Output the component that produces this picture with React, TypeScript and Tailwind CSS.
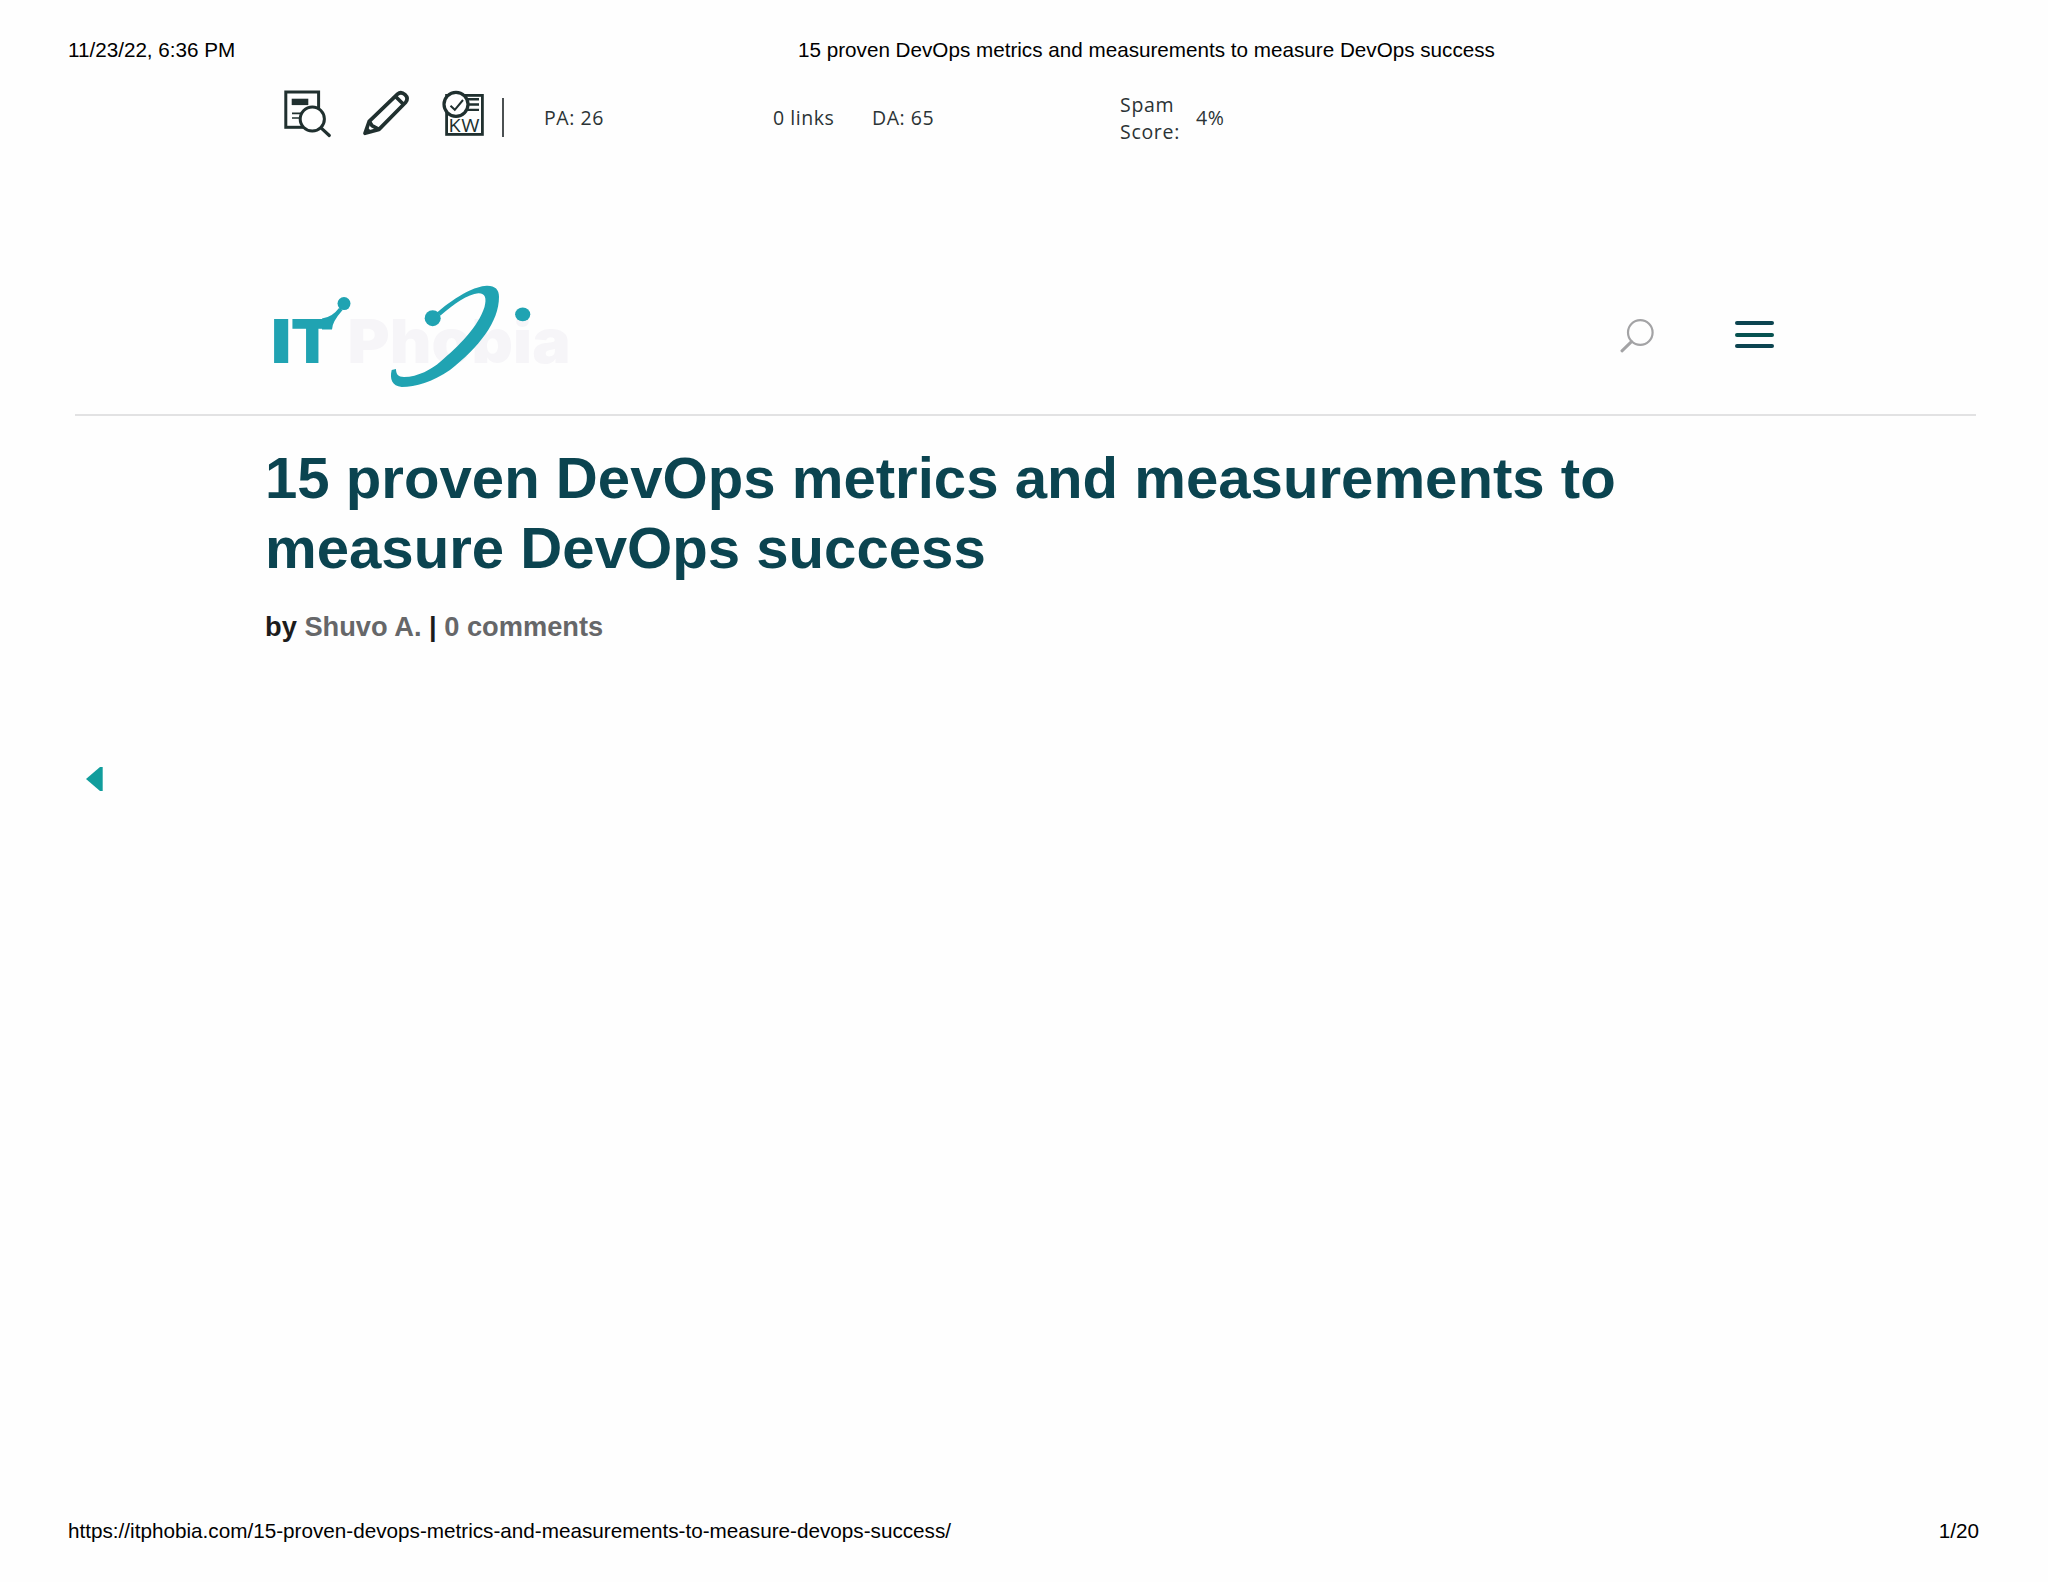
import React from 'react';

const PAGE_TITLE = '15 proven DevOps metrics and measurements to measure DevOps success';

const AuditIcon: React.FC = () => (
  <svg width="56" height="56" viewBox="0 0 56 56" fill="none" stroke="#20302f" strokeWidth="3">
    <rect x="5.8" y="6" width="32.8" height="35.3" />
    <path d="M11.7 12.7h16.6v6.4H11.7z" fill="#20302f" stroke="none" />
    <path d="M12 27.3h11M12 32h8" strokeWidth="1.7" />
    <circle cx="32.3" cy="33" r="12.1" fill="#fff" />
    <path d="M41 41.8l8.3 7.7" strokeWidth="3.2" strokeLinecap="round" />
  </svg>
);

const PencilIcon: React.FC = () => (
  <svg width="56" height="56" viewBox="0 0 56 56" fill="none" stroke="#20302f" strokeWidth="3.7" strokeLinejoin="round">
    <path d="M9 47.3L13.2 35.3 41.5 8.2Q45 5 49 8.7T49.5 16.5L23 43.4z" />
    <path d="M39.5 10.5l8.2 8M13.2 35.3l2.7 4.3 7.1 3.8" />
    <path d="M8.5 47.8l2.2-7.3 5 5z" fill="#20302f" stroke="none" />
  </svg>
);

const KeywordIcon: React.FC = () => (
  <svg width="56" height="56" viewBox="0 0 56 56" fill="none" stroke="#20302f" strokeWidth="2.8">
    <rect x="8.6" y="9.4" width="35.8" height="39" />
    <path d="M29 13.2h12M29 18.5h12M29 23.9h12" strokeWidth="2.4" />
    <circle cx="18" cy="18.3" r="12" fill="#fff" strokeWidth="3.2" />
    <path d="M12.5 19.8l4.3 4 8.2-9.8" strokeWidth="2" />
    <text x="10.5" y="46.3" fontFamily="Open Sans" fontSize="17.8" fill="#20302f" stroke="none" textLength="31.5" lengthAdjust="spacingAndGlyphs">KW</text>
  </svg>
);

const Logo: React.FC = () => (
  <svg width="304" height="110" viewBox="0 0 304 110" fontFamily="Inter" fontWeight="900" fontSize="61">
    <text x="75.5" y="83" fill="#f6f5f8" textLength="223" lengthAdjust="spacingAndGlyphs">Phobia</text>
    <g fill="#20a3b2">
      <text x="-1.2" y="82.7" textLength="20.8" lengthAdjust="spacingAndGlyphs">I</text>
      <text x="18.7" y="82.7" textLength="43" lengthAdjust="spacingAndGlyphs">T</text>
      <path d="M50 38.4Q60 37.5 67 28l3.6 2Q60 42 60 49.4H50z" />
      <circle cx="72" cy="23.6" r="6.5" />
      <circle cx="160.7" cy="38.2" r="8" />
      <ellipse cx="250.7" cy="34.3" rx="7.6" ry="6.9" />
      <path d="M165 32.5C187 14 203 6.5 214.7 5.7C223 5.5 227 9.5 227 16.7C227 42 207 67 178 90C160 102 144 107 129.7 107C120 106 117.5 99 119.7 90L124 89C124 94 126 97 132 97C146 97 160 89 168 82C187 66 206 47 212.5 27C215 18 213 13 206.3 13.3C196 14 182 24 168.5 35.5Z" />
    </g>
  </svg>
);

const Toolbar: React.FC = () => (
  <div className="flex h-20 items-center pl-[280px] font-['Open_Sans',sans-serif] text-[19.5px] leading-[27px] tracking-[0.55px] text-[#2b3335]">
    <div className="flex h-full w-[222px] pt-1.5">
      <AuditIcon />
      <div className="ml-5 mr-[26px]">
        <PencilIcon />
      </div>
      <KeywordIcon />
    </div>
    <div className="mt-[-5px] h-[39px] w-0.5 shrink-0 bg-[#4b5052]" />
    <div className="flex items-center pb-[5px]">
      <span className="w-[269px] pl-10">PA: 26</span>
      <span className="w-[99px]">0 links</span>
      <span className="w-[248px]">DA: 65</span>
      <span className="w-[76px] tracking-[0.7px]">Spam<br />Score:</span>
      <span>4%</span>
    </div>
  </div>
);

const SiteHeader: React.FC = () => (
  <div className="ml-[75px] mr-[72px] mt-[120px] flex h-[136px] items-start border-b-2 border-[#e2e2e3] pl-[197px]">
    <Logo />
    <svg className="ml-[1044px] mt-[36px]" width="38" height="38" viewBox="0 0 38 38" fill="none" stroke="#a3a3a5">
      <circle cx="20.3" cy="16.5" r="12.3" strokeWidth="2.2" />
      <path d="M11.5 25.7L2 34.8" strokeWidth="3" strokeLinecap="round" />
    </svg>
    <div className="ml-[77px] mt-[41px] flex w-[39px] flex-col gap-[7.6px]">
      <span className="h-1 rounded-full bg-[#0c4450]" />
      <span className="h-1 rounded-full bg-[#065250]" />
      <span className="h-1 rounded-full bg-[#0c4450]" />
    </div>
  </div>
);

const App: React.FC = () => {
  return (
    <div className="flex h-[1582px] w-[2048px] flex-col whitespace-nowrap bg-[#fefefe] font-['Liberation_Sans',sans-serif] text-black">
      <header className="flex h-20 pl-[68px] pt-9 text-[20.67px] leading-7">
        <span className="w-[730px]">11/23/22, 6:36 PM</span>
        <span>{PAGE_TITLE}</span>
      </header>

      <Toolbar />
      <SiteHeader />

      <main className="flex-1 pl-[265px] pt-[27px]">
        <h1 className="w-[1400px] whitespace-normal text-[58.15px] font-bold leading-[70px] text-[#0b4450]">
          {PAGE_TITLE}
        </h1>
        <p className="mt-6 text-[27.25px] font-bold leading-[40px] text-[#666769]">
          <span className="text-[#1c1c1c]">by</span> Shuvo A. <span className="text-[#1c1c1c]">|</span> 0 comments
        </p>
        <svg className="ml-[-179px] mt-[120px]" width="17" height="24" viewBox="0 0 17 24">
          <path d="M0 12L14 0h2.7v24H14z" fill="#109d9c" />
        </svg>
      </main>

      <footer className="flex h-[65px] justify-between pl-[68px] pr-[69px] text-[20.7px] leading-7">
        <span>https://itphobia.com/15-proven-devops-metrics-and-measurements-to-measure-devops-success/</span>
        <span>1/20</span>
      </footer>
    </div>
  );
};

export default App;
